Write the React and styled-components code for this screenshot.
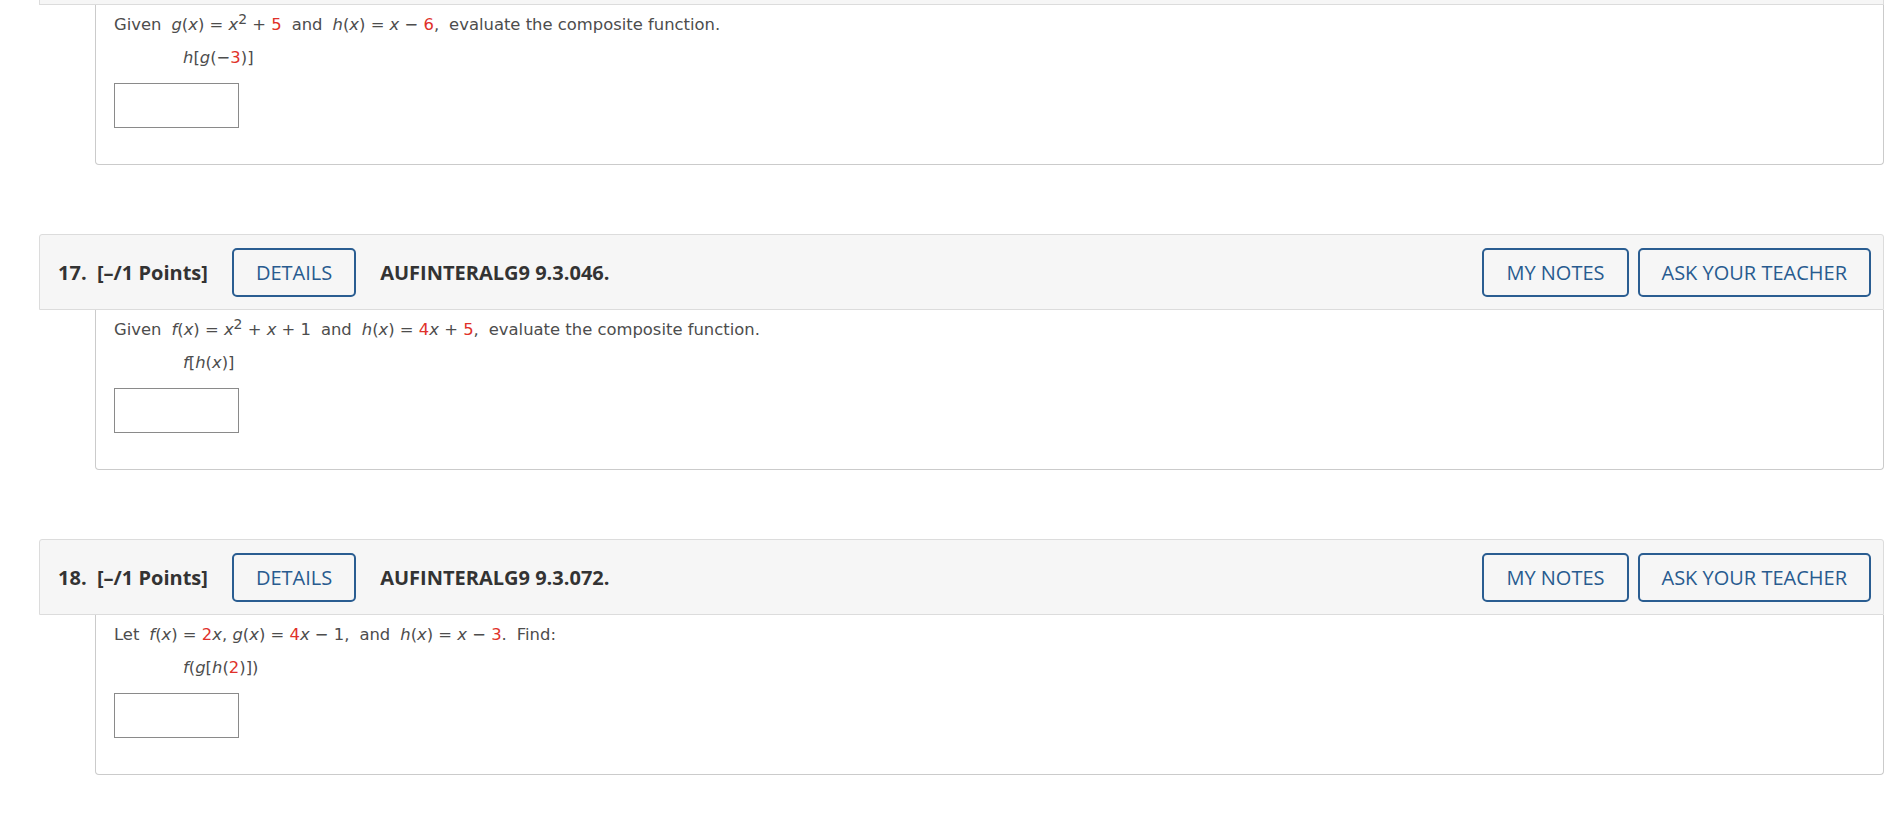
import React from 'react'
import styled, {createGlobalStyle} from 'styled-components'

const GlobalStyle = createGlobalStyle`
  body {
    margin: 0;
    background: #fff;
    font-family: "DejaVu Sans", Verdana, sans-serif;
  }
`

const Page = styled.div`
  padding: 0 19px 40px 39px;
  display: flex;
  flex-direction: column;
  gap: 69px;
`

const Question = styled.section`
  display: flex;
  flex-direction: column;
`

const HeaderStrip = styled.div`
  height: 4px;
  background: #f6f6f6;
  border: 1px solid #dcdcdc;
  border-top: none;
`

const Header = styled.div`
  display: flex;
  align-items: center;
  gap: 24px;
  height: 76px;
  box-sizing: border-box;
  padding: 0 12px 0 18px;
  background: #f6f6f6;
  border: 1px solid #dcdcdc;
  border-radius: 3px 3px 0 0;
  font-family: "Open Sans", sans-serif;
  font-size: 20px;
  color: #333;
`

const Label = styled.span`
  font-weight: 700;
`

const Code = styled.span`
  font-weight: 700;
  flex: 1;
`

const BtnGroup = styled.div`
  display: flex;
  gap: 9px;
`

const Btn = styled.button`
  font-family: "Open Sans", sans-serif;
  font-size: 20px;
  font-weight: 500;
  line-height: 27px;
  color: #285b8f;
  background: #f6f6f6;
  border: 2px solid #2a5d91;
  border-radius: 5px;
  padding: 9px 22px;
`

const Body = styled.div`
  margin-left: 56px;
  padding: 10px 18px 36px;
  border: 1px solid #cbcbcb;
  border-top: none;
  border-radius: 0 0 4px 4px;
  color: #4d4d4d;
  font-size: 16.4px;
`

const Statement = styled.div`
  line-height: 20px;
`

const M = styled.span`
  margin: 0 10px;
`

const Var = styled.i`
  font-style: italic;
`

const Red = styled.span`
  color: #e0312a;
`

const Sup = styled.sup`
  font-size: 0.85em;
  line-height: 0;
  vertical-align: 0.42em;
`

const Target = styled.div`
  line-height: 20px;
  margin: 13px 0 15px 69px;
`

const AnswerInput = styled.input`
  display: block;
  width: 125px;
  height: 45px;
  box-sizing: border-box;
  border: 1px solid #8a8a8a;
  margin: 0;
  background: #fff;
`

const V = ({children}) => <Var>{children}</Var>
const R = ({children}) => <Red>{children}</Red>

const statement = (kind) => {
  if (kind === 'f16') return (
    <>
      Given<M><V>g</V>(<V>x</V>) = <V>x</V><Sup>2</Sup> + <R>5</R></M>and<M><V>h</V>(<V>x</V>) = <V>x</V> − <R>6</R>,</M>evaluate the composite function.
    </>
  )
  if (kind === 'f17') return (
    <>
      Given<M><V>f</V>(<V>x</V>) = <V>x</V><Sup>2</Sup> + <V>x</V> + 1</M>and<M><V>h</V>(<V>x</V>) = <R>4</R><V>x</V> + <R>5</R>,</M>evaluate the composite function.
    </>
  )
  return (
    <>
      Let<M><V>f</V>(<V>x</V>) = <R>2</R><V>x</V>, <V>g</V>(<V>x</V>) = <R>4</R><V>x</V> − 1,</M>and<M><V>h</V>(<V>x</V>) = <V>x</V> − <R>3</R>.</M>Find:
    </>
  )
}

const target = (kind) => {
  if (kind === 'f16') return <><V>h</V>[<V>g</V>(−<R>3</R>)]</>
  if (kind === 'f17') return <><V>f</V>[<V>h</V>(<V>x</V>)]</>
  return <><V>f</V>(<V>g</V>[<V>h</V>(<R>2</R>)])</>
}

const questions = [
  {num: 17, code: 'AUFINTERALG9 9.3.046.', kind: 'f17'},
  {num: 18, code: 'AUFINTERALG9 9.3.072.', kind: 'f18'}
]

const QuestionBody = ({kind}) => (
  <Body>
    <Statement>{statement(kind)}</Statement>
    <Target>{target(kind)}</Target>
    <AnswerInput type="text" />
  </Body>
)

export default function App() {
  return (
    <Page>
      <GlobalStyle />
      <Question>
        <HeaderStrip />
        <QuestionBody kind="f16" />
      </Question>
      {questions.map((q) => (
        <Question key={q.num}>
          <Header>
            <Label>{q.num}.&nbsp; [–/1 Points]</Label>
            <Btn>DETAILS</Btn>
            <Code>{q.code}</Code>
            <BtnGroup>
              <Btn>MY NOTES</Btn>
              <Btn>ASK YOUR TEACHER</Btn>
            </BtnGroup>
          </Header>
          <QuestionBody kind={q.kind} />
        </Question>
      ))}
    </Page>
  )
}
